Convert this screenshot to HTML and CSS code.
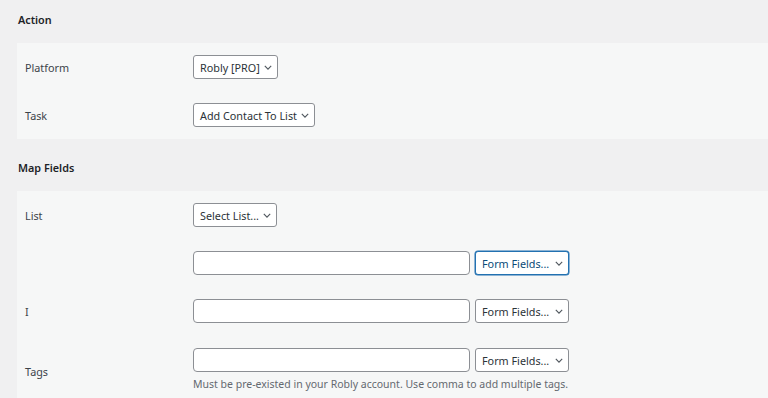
FILE: index.html
```html
<!DOCTYPE html>
<html lang="en">
<head>
<meta charset="utf-8">
<title>Action</title>
<link rel="stylesheet" href="styles.css">
</head>
<body>
<h2 class="heading">Action</h2>
<div class="panel">
  <div class="row">
    <div class="label">Platform</div>
    <div class="control">
      <span class="select">Robly [PRO]<svg class="chev" viewBox="0 0 10 6"><path d="M1 1l4 4 4-4"/></svg></span>
    </div>
  </div>
  <div class="row">
    <div class="label">Task</div>
    <div class="control">
      <span class="select">Add Contact To List<svg class="chev" viewBox="0 0 10 6"><path d="M1 1l4 4 4-4"/></svg></span>
    </div>
  </div>
</div>
<h2 class="heading heading-next">Map Fields</h2>
<div class="panel">
  <div class="row">
    <div class="label">List</div>
    <div class="control">
      <span class="select">Select List...<svg class="chev" viewBox="0 0 10 6"><path d="M1 1l4 4 4-4"/></svg></span>
    </div>
  </div>
  <div class="row">
    <div class="label"></div>
    <div class="control">
      <div class="field">
        <span class="input"></span>
        <span class="select select-ff focus">Form Fields...<svg class="chev" viewBox="0 0 10 6"><path d="M1 1l4 4 4-4"/></svg></span>
      </div>
    </div>
  </div>
  <div class="row">
    <div class="label">I</div>
    <div class="control">
      <div class="field">
        <span class="input"></span>
        <span class="select select-ff">Form Fields...<svg class="chev" viewBox="0 0 10 6"><path d="M1 1l4 4 4-4"/></svg></span>
      </div>
    </div>
  </div>
  <div class="row row-last">
    <div class="label">Tags</div>
    <div class="control">
      <div class="field">
        <span class="input"></span>
        <span class="select select-ff">Form Fields...<svg class="chev" viewBox="0 0 10 6"><path d="M1 1l4 4 4-4"/></svg></span>
      </div>
      <p class="desc">Must be pre-existed in your Robly account. Use comma to add multiple tags.</p>
    </div>
  </div>
</div>
</body>
</html>
```
FILE: styles.css
```css
html, body {
  margin: 0;
  padding: 0;
}
body {
  background: #f0f0f1;
  font-family: "Noto Sans", "Open Sans", sans-serif;
  font-size: 10.8px;
  color: #3c434a;
  overflow: hidden;
}
.heading {
  margin: 0;
  padding: 10px 0 13px 18px;
  font-size: 10.8px;
  font-weight: 600;
  line-height: 20px;
  color: #1d2327;
}
.heading-next {
  padding-top: 19px;
}
.panel {
  margin-left: 17px;
  background: #f6f7f7;
  padding-left: 8px;
}
.row {
  display: grid;
  grid-template-columns: 168px 1fr;
  align-items: center;
  padding: 12px 0;
}
.row-last {
  padding-top: 13px;
}
.label {
  color: #3c434a;
  line-height: 20px;
  padding-top: 2px;
}
.control {
  display: flex;
  flex-direction: column;
  align-items: flex-start;
}
.field {
  display: flex;
  gap: 5px;
}
.select {
  box-sizing: border-box;
  display: inline-flex;
  align-items: center;
  height: 24px;
  padding: 1px 5px 0 6px;
  border: 1px solid #8c8f94;
  border-radius: 3px;
  background: #fff;
  color: #2c3338;
  line-height: 22px;
  white-space: nowrap;
}
.chev {
  width: 8px;
  height: 5px;
  margin-left: 4px;
  fill: none;
  stroke: #50575e;
  stroke-width: 1.4;
}
.select-ff .chev {
  margin-left: 6px;
}
.focus {
  border-color: #2271b1;
  box-shadow: 0 0 0 0.5px #2271b1;
  color: #0a4b78;
}
.input {
  box-sizing: border-box;
  display: block;
  width: 277px;
  height: 24px;
  border: 1px solid #8c8f94;
  border-radius: 4px;
  background: #fff;
}
.desc {
  margin: 3px 0 0;
  font-size: 10.5px;
  line-height: 18px;
  color: #646970;
}
```
